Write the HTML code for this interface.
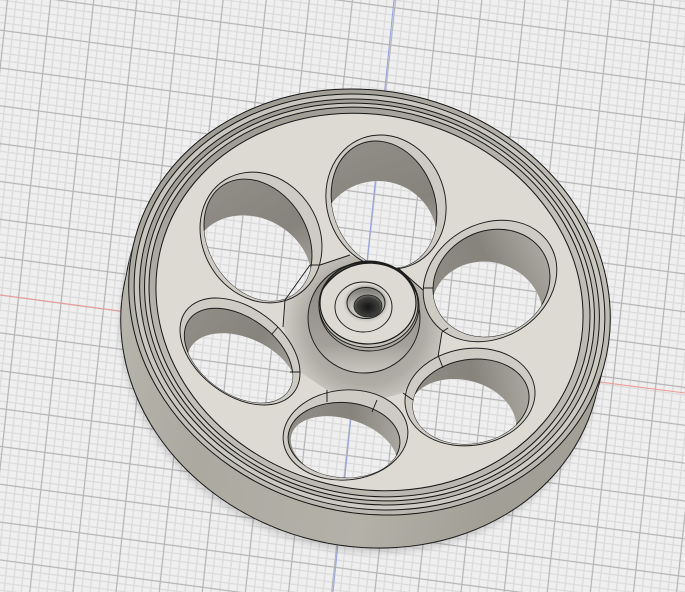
<!DOCTYPE html>
<html><head><meta charset="utf-8"><style>html,body{margin:0;padding:0;background:#eeeeef;overflow:hidden}svg{display:block}</style></head><body>
<svg width="685" height="592" viewBox="0 0 685 592" xmlns="http://www.w3.org/2000/svg">
<defs>
<pattern id="grid" patternUnits="userSpaceOnUse" width="42.5" height="37.3" patternTransform="matrix(1 0.135 -0.108 1 358.5 343.4)">
<g stroke="#dadadb" stroke-width="1.2" fill="none">
<path d="M8.5 0V37.3M17 0V37.3M25.5 0V37.3M34 0V37.3M0 7.46H42.5M0 14.92H42.5M0 22.38H42.5M0 29.84H42.5"/></g>
<path d="M0 0V37.3M0 0H42.5M42.5 0V37.3M0 37.3H42.5" stroke="#b4b4b5" stroke-width="1.2" fill="none"/>
</pattern>
<g id="bg">
<rect width="685" height="592" fill="#efeff0"/>
<rect width="685" height="592" fill="url(#grid)"/>
<path d="M394 0L333 592" stroke="#9aa4e0" stroke-width="1.1" fill="none"/>
<path d="M0 295L120 311L600 382L685 393" stroke="#f09a98" stroke-width="1.1" fill="none"/>
</g>
<linearGradient id="side" x1="0" y1="0" x2="1" y2="0.25"><stop offset="0" stop-color="#bcbbb2"/><stop offset=".45" stop-color="#aba9a0"/><stop offset=".8" stop-color="#b3b1a8"/><stop offset="1" stop-color="#a19f96"/></linearGradient>
<linearGradient id="wall" x1="0" y1="0" x2="1" y2="0"><stop offset="0" stop-color="#8f8d85"/><stop offset=".55" stop-color="#85837b"/><stop offset="1" stop-color="#a9a79f"/></linearGradient>
<linearGradient id="rimA" x1="0" y1="0" x2="1" y2="1"><stop offset="0" stop-color="#8f8d85"/><stop offset=".5" stop-color="#c2c0b8"/><stop offset="1" stop-color="#b4b2aa"/></linearGradient>
<linearGradient id="rimB" x1="0" y1="0" x2="1" y2="1"><stop offset="0" stop-color="#c6c4bd"/><stop offset="1" stop-color="#cdcbc4"/></linearGradient>
<radialGradient id="star" gradientUnits="userSpaceOnUse" cx="366" cy="325" r="85"><stop offset="0" stop-color="#989690"/><stop offset=".7" stop-color="#aeaca4"/><stop offset="1" stop-color="#d0cec7"/></radialGradient>
<linearGradient id="cone" x1="0" y1="1" x2="0" y2="0"><stop offset="0" stop-color="#c9c7c0"/><stop offset=".25" stop-color="#a3a199"/><stop offset="1" stop-color="#85837b"/></linearGradient>
<radialGradient id="hole" cx=".5" cy=".55" r=".58"><stop offset="0" stop-color="#161616"/><stop offset=".7" stop-color="#3c3c3a"/><stop offset="1" stop-color="#7d7b75"/></radialGradient>
<linearGradient id="cham" x1="0" y1="0" x2="0" y2="1"><stop offset="0" stop-color="#6e6d68"/><stop offset=".6" stop-color="#c2c0b9"/><stop offset="1" stop-color="#dcdad3"/></linearGradient>
<filter id="soft" filterUnits="userSpaceOnUse" x="0" y="0" width="685" height="592"><feGaussianBlur stdDeviation="0.35"/></filter>
<filter id="b4" filterUnits="userSpaceOnUse" x="0" y="0" width="685" height="592"><feGaussianBlur stdDeviation="3"/></filter>
<filter id="b2" filterUnits="userSpaceOnUse" x="0" y="0" width="685" height="592"><feGaussianBlur stdDeviation="1.6"/></filter>

<clipPath id="a2"><ellipse cx="384" cy="204.5" rx="65" ry="51" transform="rotate(70 384 204.5)"/></clipPath>
<clipPath id="a3"><ellipse cx="378" cy="239" rx="59" ry="58"/></clipPath>
<clipPath id="b2c"><ellipse cx="258" cy="240" rx="65" ry="49" transform="rotate(58 258 240)"/></clipPath>
<clipPath id="b3"><ellipse cx="252" cy="270" rx="62" ry="52" transform="rotate(30 252 270)"/></clipPath>
<clipPath id="c2"><ellipse cx="491.5" cy="283" rx="60" ry="52" transform="rotate(-27 491.5 283)"/></clipPath>
<clipPath id="c3"><ellipse cx="487" cy="312" rx="56" ry="50" transform="rotate(15 487 312)"/></clipPath>
<clipPath id="d2"><ellipse cx="471" cy="401.5" rx="58.4" ry="42" transform="rotate(-9 471 401.5)"/></clipPath>
<clipPath id="d3"><ellipse cx="462" cy="420" rx="55" ry="40" transform="rotate(14 462 420)"/></clipPath>
<clipPath id="e2"><ellipse cx="344" cy="440" rx="56" ry="37.5" transform="rotate(4 344 440)"/></clipPath>
<clipPath id="e3"><ellipse cx="344" cy="451" rx="55" ry="32" transform="rotate(18 344 451)"/></clipPath>
<clipPath id="f2"><ellipse cx="238.5" cy="355.5" rx="61" ry="38" transform="rotate(36 238.5 355.5)"/></clipPath>
<clipPath id="f3"><ellipse cx="242" cy="374" rx="58" ry="36" transform="rotate(25 242 374)"/></clipPath>
</defs>

<use href="#bg"/>
<ellipse cx="360" cy="340" rx="243" ry="211" transform="rotate(15.6 360 340)" fill="#000" opacity=".12" filter="url(#b4)"/>

<g filter="url(#soft)">
<!-- body -->
<g stroke="#1c1c1c" stroke-width="2" fill="none">
<ellipse cx="361" cy="336" rx="242" ry="209" transform="rotate(15.6 361 336)"/>
<ellipse cx="365" cy="319" rx="242.500" ry="209.500" transform="rotate(15.6 365 319)"/>
</g>
<g fill="url(#side)">
<ellipse cx="361" cy="336" rx="242" ry="209" transform="rotate(15.6 361 336)"/>
<ellipse cx="363" cy="328" rx="242.300" ry="209.300" transform="rotate(15.6 363 328)"/>
<ellipse cx="365" cy="319" rx="242.500" ry="209.500" transform="rotate(15.6 365 319)"/>
<ellipse cx="367" cy="310" rx="242.800" ry="210" transform="rotate(15.6 367 310)"/>
</g>

<!-- rim rings -->
<g transform="rotate(15.6 369.5 302)" stroke="#141414" stroke-width="1">
<ellipse cx="369.5" cy="302" rx="243" ry="210.500" fill="url(#rimA)"/>
<ellipse cx="369.5" cy="302" rx="237.500" ry="205.500" fill="url(#rimB)"/>
<ellipse cx="369.5" cy="302" rx="232" ry="200.500" fill="url(#rimA)"/>
<ellipse cx="369.5" cy="302" rx="227" ry="196.500" fill="url(#rimB)"/>
<ellipse cx="369.5" cy="302" rx="222.500" ry="192.500" fill="url(#rimA)"/>
<ellipse cx="369.5" cy="302" rx="215.500" ry="186.500" fill="#dcdad3"/>
</g>

<!-- star-shaped hub fillet -->
<path d="M285 300L310 265L320 265L350 255L368 262L398 268L423 290L442 332L438 357L403 393L377 400L327 390L300 372L283 327Z" fill="url(#star)"/>

<!-- hole A -->
<ellipse cx="386" cy="202" rx="68" ry="59" transform="rotate(70 386 202)" fill="#cdcbc4" stroke="#1c1c1c" stroke-width=".95"/>
<ellipse cx="384" cy="204.500" rx="65" ry="51" transform="rotate(70 384 204.500)" fill="url(#wall)" stroke="#1c1c1c" stroke-width=".95"/>
<g clip-path="url(#a2)"><use href="#bg" clip-path="url(#a3)"/></g>
<!-- hole B -->
<ellipse cx="261" cy="237.500" rx="68" ry="58" transform="rotate(58 261 237.500)" fill="#cdcbc4" stroke="#1c1c1c" stroke-width=".95"/>
<ellipse cx="258" cy="240" rx="65" ry="49" transform="rotate(58 258 240)" fill="url(#wall)" stroke="#1c1c1c" stroke-width=".95"/>
<g clip-path="url(#b2c)"><use href="#bg" clip-path="url(#b3)"/></g>
<!-- hole C -->
<ellipse cx="490" cy="281" rx="70" ry="57" transform="rotate(-31 490 281)" fill="#cdcbc4" stroke="#1c1c1c" stroke-width=".95"/>
<ellipse cx="491.500" cy="283" rx="60" ry="52" transform="rotate(-27 491.500 283)" fill="url(#wall)" stroke="#1c1c1c" stroke-width=".95"/>
<g clip-path="url(#c2)"><use href="#bg" clip-path="url(#c3)"/></g>
<!-- hole D -->
<ellipse cx="470" cy="397" rx="65.300" ry="48.500" transform="rotate(-8 470 397)" fill="#cdcbc4" stroke="#1c1c1c" stroke-width=".95"/>
<ellipse cx="471" cy="401.500" rx="58.400" ry="42" transform="rotate(-9 471 401.500)" fill="url(#wall)" stroke="#1c1c1c" stroke-width=".95"/>
<g clip-path="url(#d2)"><use href="#bg" clip-path="url(#d3)"/></g>
<!-- hole E -->
<ellipse cx="345.500" cy="435" rx="62.500" ry="45" transform="rotate(-5 345.500 435)" fill="#cdcbc4" stroke="#1c1c1c" stroke-width=".95"/>
<ellipse cx="344" cy="440" rx="56" ry="37.500" transform="rotate(4 344 440)" fill="url(#wall)" stroke="#1c1c1c" stroke-width=".95"/>
<g clip-path="url(#e2)"><use href="#bg" clip-path="url(#e3)"/></g>
<!-- hole F -->
<ellipse cx="240" cy="351.500" rx="67.600" ry="43.500" transform="rotate(37 240 351.500)" fill="#cdcbc4" stroke="#1c1c1c" stroke-width=".95"/>
<ellipse cx="238.500" cy="355.500" rx="61" ry="38" transform="rotate(36 238.500 355.500)" fill="url(#wall)" stroke="#1c1c1c" stroke-width=".95"/>
<g clip-path="url(#f2)"><use href="#bg" clip-path="url(#f3)"/></g>

<!-- short fillet seams -->
<path d="M278 327L272 334M290 372L300 372M327 390L327 402M377 400L372 412M438 355L443 368M403 393L413 400M423 288L433 288M442 332L448 328M442 332L438 357M310 265L320 265M320 265L350 255M285 300L310 265M398 268L423 290M285 300L283 327" stroke="#1c1c1c" stroke-width=".95" fill="none"/>

<!-- hub -->
<ellipse cx="364" cy="318" rx="56" ry="55" fill="url(#cone)" stroke="#1c1c1c" stroke-width=".95"/>
<ellipse cx="369" cy="306" rx="50" ry="45" fill="#a9a79f" stroke="#1c1c1c" stroke-width=".95"/>
<ellipse cx="368.500" cy="304.500" rx="49.500" ry="43" fill="#c4c2bb" stroke="#1c1c1c" stroke-width=".95"/>
<ellipse cx="368" cy="303" rx="48" ry="41" fill="#dcdad3" stroke="#1c1c1c" stroke-width="1.2"/>
<path d="M322 290C335 270 355 262 372 263C392 264 408 274 416 292" stroke="#1c1c1c" stroke-width="1.6" fill="none"/>
<ellipse cx="363.500" cy="307" rx="28.500" ry="25" fill="#dcdad3" stroke="#1c1c1c" stroke-width=".95"/>
<ellipse cx="366" cy="303" rx="19" ry="15.500" fill="url(#cham)" stroke="#1c1c1c" stroke-width=".95" filter="url(#b2)" opacity=".9"/>
<ellipse cx="366" cy="303" rx="19" ry="15.500" fill="none" stroke="#1c1c1c" stroke-width=".95"/>
<ellipse cx="368" cy="306" rx="14" ry="11" fill="url(#hole)" stroke="#1c1c1c" stroke-width=".8"/>
</g>
</svg>
</body></html>
